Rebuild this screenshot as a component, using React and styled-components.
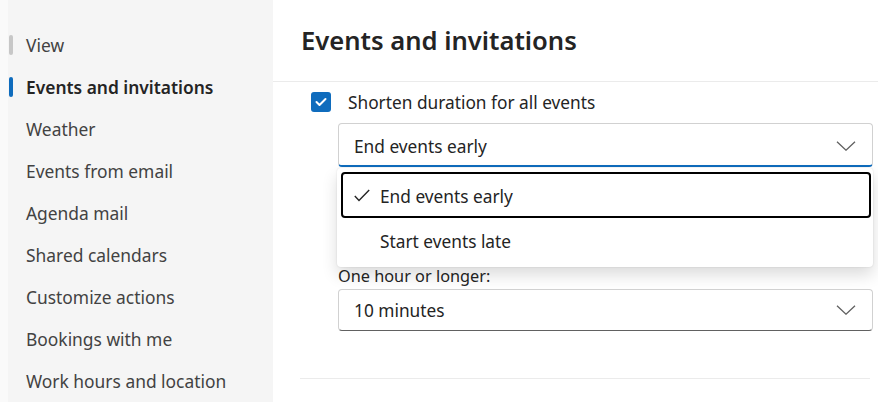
import React from 'react';
import styled, { createGlobalStyle } from 'styled-components';

const GlobalStyle = createGlobalStyle`
  html, body {
    margin: 0;
    padding: 0;
    background: #ffffff;
  }
  body {
    font-family: "Segoe UI", "Noto Sans", "Open Sans", sans-serif;
    color: #242424;
  }
`;

const Page = styled.div`
  display: flex;
  width: 878px;
  height: 402px;
  overflow: hidden;
`;

const Sidebar = styled.nav`
  width: 265px;
  flex-shrink: 0;
  background: #f5f5f5;
  border-left: 8px solid #fafafa;
  padding-top: 24px;
  display: flex;
  flex-direction: column;
`;

const NavItem = styled.div`
  height: 42px;
  display: flex;
  align-items: center;
  gap: 13px;
  padding-left: 1px;
  font-size: 17.4px;
  font-weight: ${(p) => (p.active ? 600 : 400)};
  color: ${(p) => (p.active ? '#242424' : '#424242')};
  white-space: nowrap;
`;

const Indicator = styled.span`
  width: 4px;
  height: 20px;
  border-radius: 2px;
  background: ${(p) => p.color || 'transparent'};
`;

const Main = styled.main`
  flex: 1;
  display: flex;
  flex-direction: column;
`;

const Header = styled.header`
  height: 81px;
  flex-shrink: 0;
  display: flex;
  align-items: center;
  padding-left: 28px;
  border-bottom: 1px solid #ebebeb;
`;

const Title = styled.h1`
  margin: 0;
  font-size: 25.6px;
  font-weight: 600;
  color: #242424;
`;

const Body = styled.section`
  padding: 9px 5px 0 38px;
  display: flex;
  flex-direction: column;
`;

const CheckRow = styled.label`
  display: flex;
  align-items: center;
  gap: 17px;
  height: 22px;
  font-size: 17.3px;
  color: #242424;
`;

const CheckBox = styled.span`
  width: 20px;
  height: 20px;
  border-radius: 3px;
  background: #0f6cbd;
  display: flex;
  align-items: center;
  justify-content: center;
`;

const Indent = styled.div`
  margin-left: 27px;
  display: flex;
  flex-direction: column;
`;

const SelectWrap = styled.div`
  position: relative;
  margin-top: ${(p) => p.top || 0}px;
`;

const Select = styled.div`
  box-sizing: border-box;
  height: ${(p) => p.h || 42}px;
  border: 1px solid #d1d1d1;
  border-bottom: ${(p) => (p.open ? '2px solid #0f6cbd' : '1px solid #616161')};
  border-radius: 4px;
  display: flex;
  align-items: center;
  justify-content: space-between;
  padding: ${(p) => (p.open ? '3px 16px 0 15px' : '0 16px 0 15px')};
  font-size: 17.3px;
  color: #242424;
  background: #fff;
`;

const Listbox = styled.div`
  position: absolute;
  top: calc(100% + 1px);
  left: -1px;
  right: 0;
  z-index: 2;
  background: #fff;
  border-radius: 4px;
  box-shadow: 0 0 2px rgba(0, 0, 0, 0.12), 0 8px 16px rgba(0, 0, 0, 0.14);
  padding: 4px 2px 3px 4px;
  display: flex;
  flex-direction: column;
`;

const Option = styled.div`
  box-sizing: border-box;
  height: 46px;
  display: flex;
  align-items: center;
  gap: 10px;
  padding-left: 11px;
  padding-top: ${(p) => (p.focused ? 3 : 1)}px;
  border-radius: 4px;
  border: 2px solid ${(p) => (p.focused ? '#000' : 'transparent')};
  font-size: 17.3px;
  color: #242424;
`;

const CheckSlot = styled.span`
  width: 16px;
  display: flex;
  align-items: center;
  margin-top: -3px;
`;

const FieldLabel = styled.div`
  font-size: 16.3px;
  color: #242424;
  height: 22px;
  line-height: 22px;
  margin-top: ${(p) => p.top || 0}px;
  margin-bottom: 2px;
`;

const Divider = styled.hr`
  margin: 47px 3px 0 -11px;
  border: none;
  border-top: 1px solid #ebebeb;
`;

const Chevron = () => (
  <svg width="20" height="10" viewBox="0 0 20 10" fill="none">
    <polyline points="1,0.8 10,9.2 19,0.8" stroke="#616161" strokeWidth="1.3" />
  </svg>
);

const Tick = () => (
  <svg width="16" height="13" viewBox="0 0 16 13" fill="none">
    <polyline points="0.8,7 5,11.5 15.2,1" stroke="#242424" strokeWidth="1.4" />
  </svg>
);

const navItems = [
  { label: 'View', indicator: '#c7c7c7' },
  { label: 'Events and invitations', indicator: '#0f6cbd', active: true },
  { label: 'Weather' },
  { label: 'Events from email' },
  { label: 'Agenda mail' },
  { label: 'Shared calendars' },
  { label: 'Customize actions' },
  { label: 'Bookings with me' },
  { label: 'Work hours and location' },
];

export default function App() {
  return (
    <>
      <GlobalStyle />
      <Page>
        <Sidebar>
          {navItems.map((item) => (
            <NavItem key={item.label} active={item.active}>
              <Indicator color={item.indicator} />
              {item.label}
            </NavItem>
          ))}
        </Sidebar>
        <Main>
          <Header>
            <Title>Events and invitations</Title>
          </Header>
          <Body>
            <CheckRow>
              <CheckBox>
                <svg width="12" height="10" viewBox="0 0 12 10" fill="none">
                  <polyline points="1.5,5 4.5,8 10.5,2" stroke="#fff" strokeWidth="2" strokeLinecap="round" strokeLinejoin="round" />
                </svg>
              </CheckBox>
              Shorten duration for all events
            </CheckRow>
            <Indent>
              <SelectWrap top={10}>
                <Select open h={44}>
                  End events early
                  <Chevron />
                </Select>
                <Listbox>
                  <Option focused>
                    <CheckSlot><Tick /></CheckSlot>
                    End events early
                  </Option>
                  <Option>
                    <CheckSlot />
                    Start events late
                  </Option>
                </Listbox>
              </SelectWrap>
              <FieldLabel top={98}>One hour or longer:</FieldLabel>
              <Select>
                10 minutes
                <Chevron />
              </Select>
            </Indent>
            <Divider />
          </Body>
        </Main>
      </Page>
    </>
  );
}
